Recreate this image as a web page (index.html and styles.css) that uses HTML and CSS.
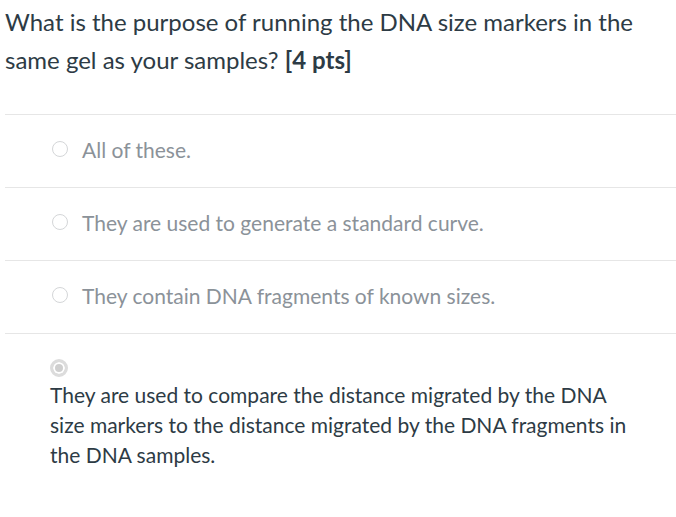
FILE: index.html
```html
<!DOCTYPE html>
<html>
<head>
<meta charset="utf-8">
<link rel="stylesheet" href="styles.css">
</head>
<body>
<div class="question">
  <div class="q-text">What is the purpose of running the DNA size markers in the same gel as your samples? <strong>[4 pts]</strong></div>
  <div class="answers">
    <div class="answer">
      <span class="radio"></span>
      <span class="label">All of these.</span>
    </div>
    <div class="answer">
      <span class="radio"></span>
      <span class="label">They are used to generate a standard curve.</span>
    </div>
    <div class="answer">
      <span class="radio"></span>
      <span class="label">They contain DNA fragments of known sizes.</span>
    </div>
    <div class="answer selected">
      <span class="radio checked"></span>
      <span class="label">They are used to compare the distance migrated by the DNA size markers to the distance migrated by the DNA fragments in the DNA samples.</span>
    </div>
  </div>
</div>
</body>
</html>
```
FILE: styles.css
```css
html, body {
  margin: 0;
  padding: 0;
  background: #ffffff;
}
body {
  font-family: Lato, "Open Sans", sans-serif;
  color: #2d3b45;
}
.question {
  padding: 3px 0 0 5px;
}
.q-text {
  font-size: 24px;
  line-height: 38px;
  padding-right: 30px;
  padding-bottom: 35px;
  border-bottom: 1px solid #e6e6e6;
}
.q-text strong {
  font-weight: 700;
}
.answer {
  display: flex;
  align-items: center;
  height: 68px;
  padding-bottom: 4px;
  border-bottom: 1px solid #e6e6e6;
  padding-left: 47px;
  font-size: 21px;
  color: #8b9299;
}
.radio {
  width: 16px;
  height: 16px;
  border: 1px solid #d4d6d8;
  border-radius: 50%;
  box-sizing: border-box;
  margin-right: 14px;
  flex: none;
}
.answer.selected {
  display: block;
  height: auto;
  border-bottom: none;
  padding: 25px 40px 0 45px;
  color: #2d3b45;
  line-height: 30px;
}
.answer.selected .radio {
  display: block;
  width: 18px;
  height: 18px;
  border: 3px solid #dcdcdc;
  background: #cfcfcf;
  box-shadow: inset 0 0 0 2px #ffffff;
  margin: 0 0 3px 0;
}
.answer.selected .label {
  display: block;
}
```
